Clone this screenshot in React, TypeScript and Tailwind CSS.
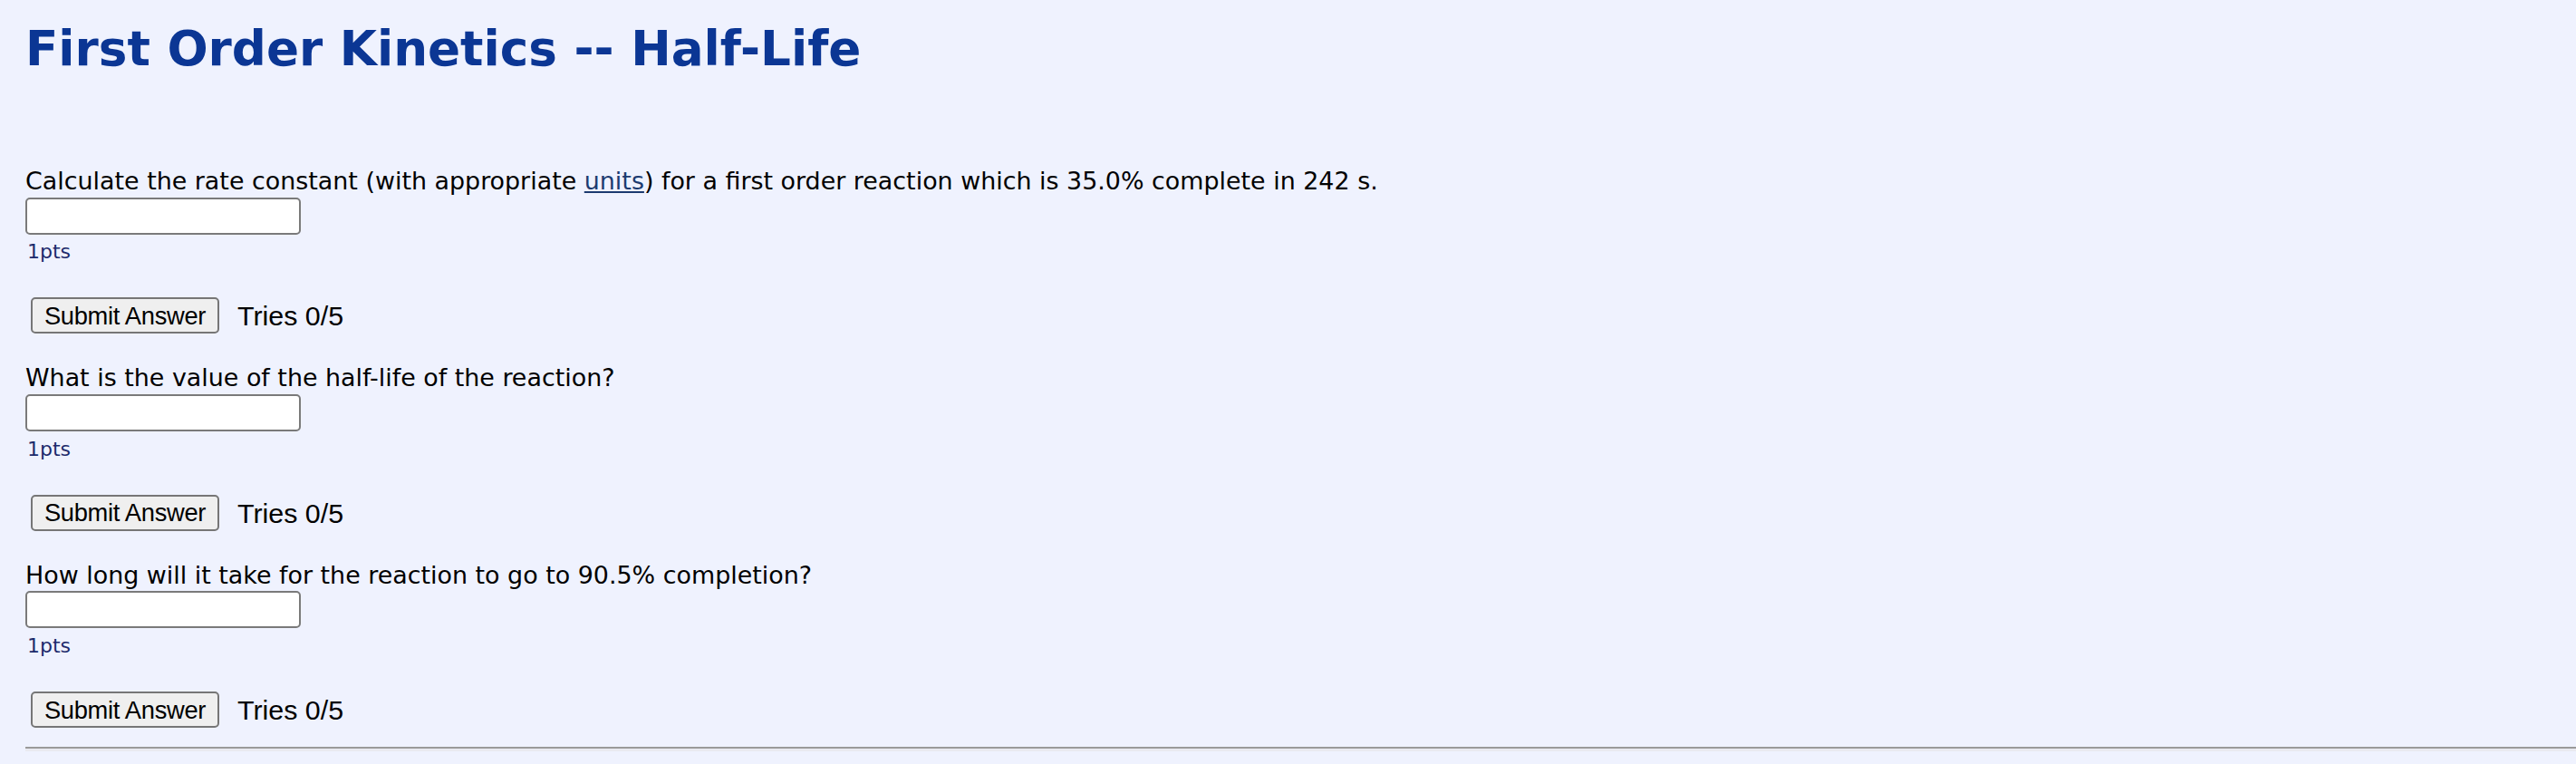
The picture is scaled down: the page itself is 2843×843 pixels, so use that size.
import React from "react";

const verdana = { fontFamily: '"DejaVu Sans", Verdana, sans-serif' };

function Question({ children }: { children: React.ReactNode }) {
  return (
    <div className="flex flex-col">
      <div
        className="text-[26.9px] leading-[30px] text-black whitespace-nowrap"
        style={verdana}
      >
        {children}
      </div>
      <input
        type="text"
        className="mt-[2.5px] w-[304px] h-[41px] bg-white border-2 border-[#7a7a7a] rounded-[5px] outline-none"
      />
      <div
        className="mt-[7.7px] text-[22px] leading-[24px] text-[#1d2b6c] pl-[2px]"
        style={verdana}
      >
        1pts
      </div>
      <div className="mt-[38.3px] flex items-center h-[40px]">
        <button
          className="ml-[6px] h-[40px] w-[208px] bg-[#efefef] border-2 border-[#767676] rounded-[5px] text-black text-[27.3px] leading-none tracking-[-0.3px] flex items-center justify-center"
          style={{ fontFamily: '"Liberation Sans", Arial, sans-serif' }}
        >
          Submit Answer
        </button>
        <span
          className="ml-[20px] text-[30.4px] leading-none text-black"
          style={{ fontFamily: '"Liberation Sans", Arial, sans-serif' }}
        >
          Tries 0/5
        </span>
      </div>
    </div>
  );
}

export default function App() {
  return (
    <div className="min-h-[843px] w-full bg-[#eff2fe] pl-[28px] overflow-hidden">
      <h1
        className="pt-[22px] text-[53.2px] leading-[64px] font-bold text-[#0b3694] whitespace-nowrap"
        style={verdana}
      >
        First Order Kinetics -- Half-Life
      </h1>
      <div className="mt-[99px] flex flex-col gap-[34px]">
        <Question>
          Calculate the rate constant (with appropriate{" "}
          <a href="#" className="underline text-[#1c3b70]">
            units
          </a>
          ) for a first order reaction which is 35.0% complete in 242 s.
        </Question>
        <Question>What is the value of the half-life of the reaction?</Question>
        <Question>How long will it take for the reaction to go to 90.5% completion?</Question>
      </div>
      <hr className="mt-[20.5px] h-0 border-0 border-t-2 border-t-[#9a9a9a] border-b-[3px] border-b-[#e9eaf0]" />
    </div>
  );
}
